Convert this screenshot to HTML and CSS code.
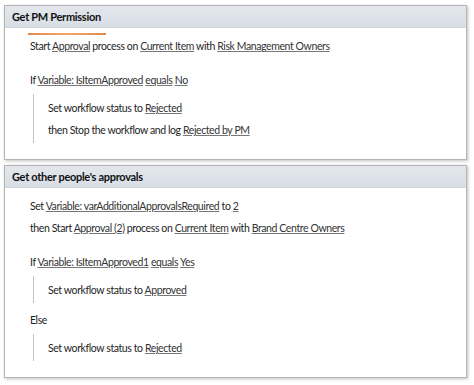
FILE: index.html
```html
<!DOCTYPE html>
<html lang="en">
<head>
    <meta charset="UTF-8">
    <title>Workflow Steps</title>
    <link rel="stylesheet" href="styles.css">
</head>
<body>
    <div class="step">
        <div class="step-header">Get PM Permission</div>
        <div class="step-body">
            <div class="insert-marker"></div>
            <div class="line">Start <a>Approval</a> process on <a>Current Item</a> with <a>Risk Management Owners</a></div>
            <div class="line condition">If <a>Variable: IsItemApproved</a> <a>equals</a> <a>No</a></div>
            <div class="branch">
                <div class="line">Set workflow status to <a>Rejected</a></div>
                <div class="line">then Stop the workflow and log <a>Rejected by PM</a></div>
            </div>
        </div>
    </div>
    <div class="step">
        <div class="step-header">Get other people's approvals</div>
        <div class="step-body">
            <div class="line">Set <a>Variable: varAdditionalApprovalsRequired</a> to <a>2</a></div>
            <div class="line">then Start <a>Approval (2)</a> process on <a>Current Item</a> with <a>Brand Centre Owners</a></div>
            <div class="line condition">If <a>Variable: IsItemApproved1</a> <a>equals</a> <a>Yes</a></div>
            <div class="branch">
                <div class="line">Set workflow status to <a>Approved</a></div>
            </div>
            <div class="line else">Else</div>
            <div class="branch">
                <div class="line">Set workflow status to <a>Rejected</a></div>
            </div>
        </div>
    </div>
</body>
</html>
```

FILE: styles.css
```css
body {
    margin: 0;
    padding: 5px 7px 0 4px;
    background-color: #ffffff;
    font-family: 'Lato', sans-serif;
    font-size: 10.5px;
    letter-spacing: -0.4px;
    color: #1e1e1e;
}
.step {
    border: 1px solid #b4b4b4;
    background-color: white;
    box-shadow: 1px 1px 3px rgba(0,0,0,0.25);
    margin-bottom: 5px;
}
.step-header {
    height: 21px;
    line-height: 21px;
    padding-left: 7px;
    font-weight: bold;
    font-size: 11px;
    letter-spacing: -0.3px;
    color: #111;
    background: linear-gradient(#e3e7ed, #d9dee6);
    border-bottom: 1px solid #d0d5dc;
}
.step-body {
    padding: 7px 0 16px 25px;
}
.insert-marker {
    width: 78px;
    height: 2px;
    margin: -2px 0 0 -2px;
    background: linear-gradient(90deg, #e08a4a, #f2a66a 50%, #e08a4a);
}
.line {
    height: 22px;
    line-height: 22px;
    white-space: nowrap;
}
.line a {
    color: #333;
    text-decoration: underline;
    text-decoration-color: #777;
}
.condition {
    margin-top: 12px;
}
.else {
    margin-top: 6px;
}
.branch {
    margin: 3px 0 0 3px;
    padding: 3px 0 2px 14px;
    border-left: 1px solid #c4c4c4;
}
```
